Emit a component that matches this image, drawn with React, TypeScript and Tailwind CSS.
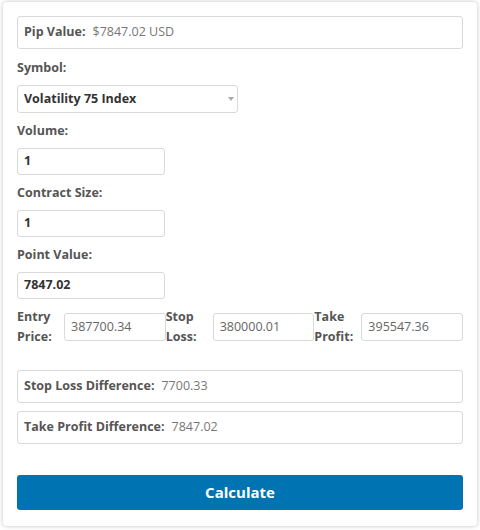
import React from "react";

const font = { fontFamily: '"Open Sans", "Liberation Sans", sans-serif' };

function Field({ label, value }: { label: string; value: string }) {
  return (
    <div className="mt-2">
      <div className="text-[12.5px] font-bold leading-[19px] text-[#555]">{label}</div>
      <div className="mt-2 flex h-[27px] w-[148px] items-center rounded-[3px] border border-[#d9d9d9] px-[6px] text-[12.5px] font-bold text-[#333]">
        {value}
      </div>
    </div>
  );
}

function Trade({ l1, l2, value }: { l1: string; l2: string; value: string }) {
  return (
    <div className="flex flex-1 items-center">
      <div className="w-[47px] text-[12.5px] font-bold leading-[20px] text-[#555]">
        <div>{l1}</div>
        <div>{l2}</div>
      </div>
      <div className="flex h-[28px] flex-1 items-center rounded-[3px] border border-[#d9d9d9] px-[6px] text-[12.5px] text-[#666]">
        {value}
      </div>
    </div>
  );
}

function Result({ label, value }: { label: string; value: string }) {
  return (
    <div className="flex h-[33px] items-center rounded-[3px] border border-[#d9d9d9] px-[6px] text-[12.5px]">
      <span className="font-bold text-[#555]">{label}</span>
      <span className="ml-[7px] text-[#777]">{value}</span>
    </div>
  );
}

export default function App() {
  return (
    <div className="h-[530px] w-[480px] bg-white pl-[3px] pt-[2px]" style={font}>
      <div className="h-[524px] w-[474px] rounded-[4px] bg-white px-[14px] pt-[14px] shadow-[0_0_4px_rgba(0,0,0,0.25)]">
        <Result label="Pip Value:" value="$7847.02 USD" />
        <div className="mt-[9px]">
          <div className="text-[12.5px] font-bold leading-[19px] text-[#555]">Symbol:</div>
          <div className="relative mt-2 flex h-[28px] w-[221px] items-center rounded-[3px] border border-[#d9d9d9] px-[6px] text-[12.5px] font-bold text-[#333]">
            Volatility 75 Index
            <span className="absolute right-[3px] top-[11px] h-0 w-0 border-x-[3px] border-t-[4px] border-x-transparent border-t-[#aaa]" />
          </div>
        </div>
        <Field label="Volume:" value="1" />
        <Field label="Contract Size:" value="1" />
        <Field label="Point Value:" value="7847.02" />
        <div className="mt-[8px] flex h-[40px]">
          <Trade l1="Entry" l2="Price:" value="387700.34" />
          <Trade l1="Stop" l2="Loss:" value="380000.01" />
          <Trade l1="Take" l2="Profit:" value="395547.36" />
        </div>
        <div className="mt-[23px]">
          <Result label="Stop Loss Difference:" value="7700.33" />
        </div>
        <div className="mt-[8px]">
          <Result label="Take Profit Difference:" value="7847.02" />
        </div>
        <button className="mt-[31px] flex h-[35px] w-full items-center justify-center rounded-[3px] bg-[#0073b2] text-[15px] font-bold text-white">
          Calculate
        </button>
      </div>
    </div>
  );
}
